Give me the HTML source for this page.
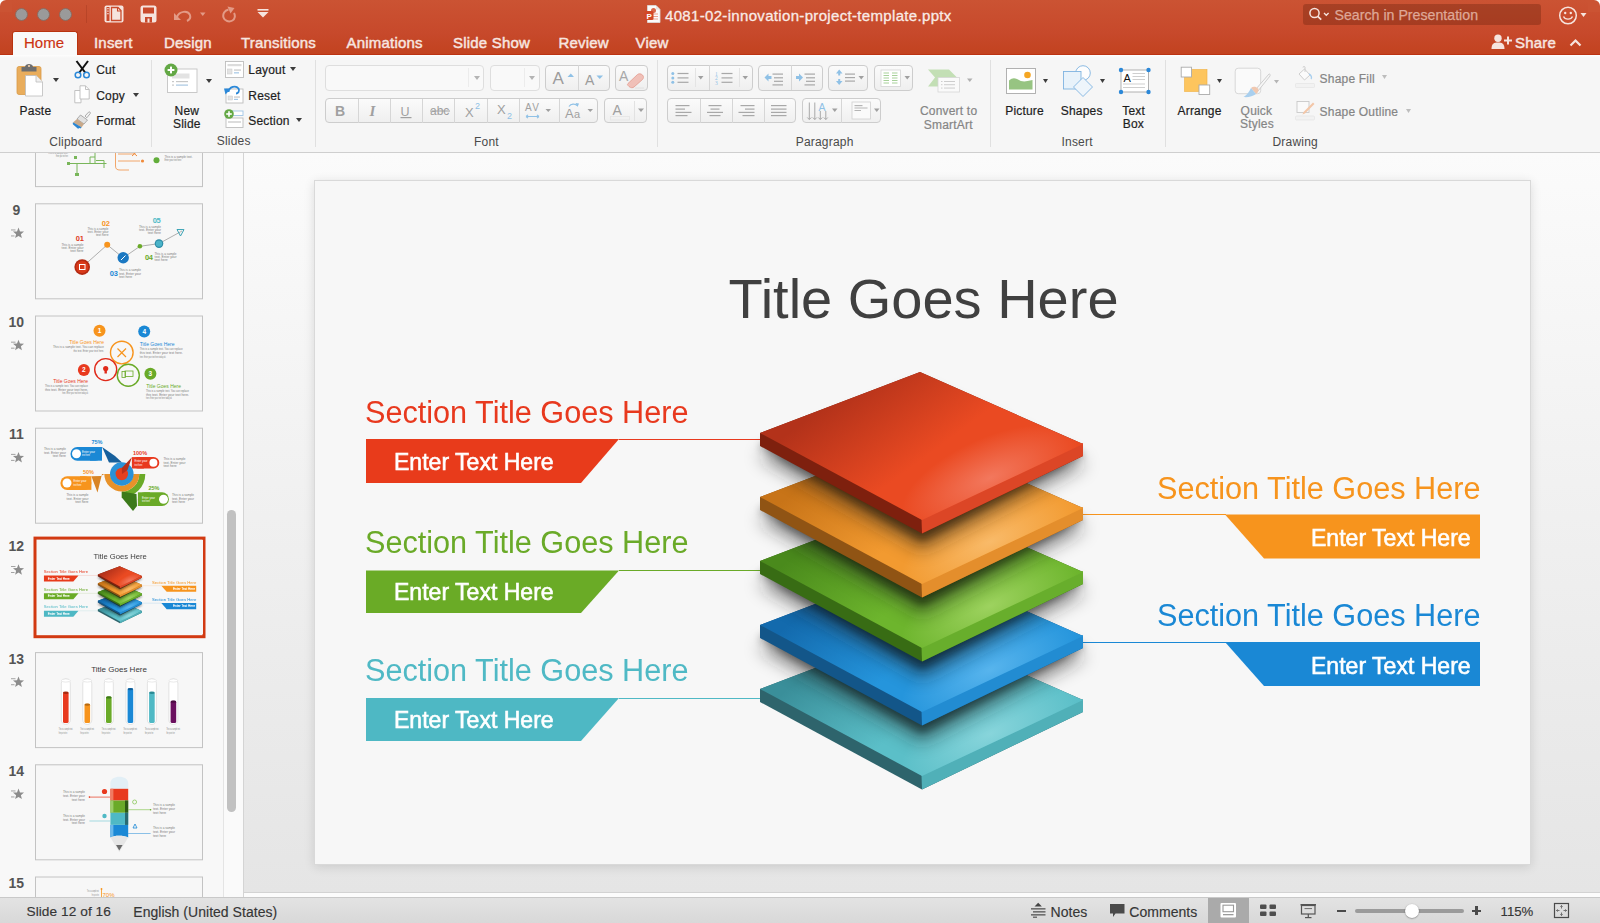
<!DOCTYPE html>
<html><head><meta charset="utf-8">
<style>
*{margin:0;padding:0;box-sizing:border-box}
html,body{width:1600px;height:923px;overflow:hidden;background:#f5f5f5;font-family:"Liberation Sans",sans-serif}
.a{position:absolute}
#top{position:absolute;left:0;top:0;width:1600px;height:55px;background:linear-gradient(#cb5333,#c7492b 60%,#c2421f)}
.tab{position:absolute;top:34px;margin-left:-0.5px;font-size:15px;line-height:17px;font-weight:normal;letter-spacing:0.2px;-webkit-text-stroke:0.45px currentColor;color:#f7e6e0;white-space:nowrap}
#hometab{position:absolute;left:12px;top:30.5px;width:66px;height:25px;background:#f9f9f9;border-radius:3px 3px 0 0;border:1px solid #b9330f;border-bottom:none}
#ribbon{position:absolute;left:0;top:55px;width:1600px;height:97px;background:linear-gradient(#fdfdfd,#f6f6f6 3px,#f6f6f6)}
#sep{position:absolute;left:0;top:152px;width:1600px;height:1px;background:#cfcfcf}
#left{position:absolute;left:0;top:153px;width:243px;height:744px;background:#f8f8f8}
#canvas{position:absolute;left:244px;top:153px;width:1356px;height:740px;background:linear-gradient(#fbfbfb,#f2f2f2 40%,#e5e5e5)}
#slide{position:absolute;left:314px;top:180px;width:1217px;height:685px;background:#f7f7f7;border:1px solid #d9d9d9;box-shadow:0 2px 10px rgba(0,0,0,0.12);overflow:hidden}
#status{display:none}
.st{position:absolute;font-size:14px;line-height:16px;color:#363636;white-space:nowrap;margin-top:0.5px;letter-spacing:0.03px;-webkit-text-stroke:0.15px currentColor}
.stt{font-size:31px;line-height:1;white-space:nowrap;transform:scaleX(0.988);transform-origin:0 0}
.ett{font-size:24px;line-height:1;color:#fff;white-space:nowrap;transform:scaleX(0.96);transform-origin:0 0;-webkit-text-stroke:0.6px #fff}
.tl{top:7.5px;width:13px;height:13px;border-radius:50%;background:#9a9a9a;border:0.5px solid #8d6a5e}
.rl{position:absolute;font-size:12px;line-height:14px;color:#1e1e1e;white-space:nowrap;margin-top:1px;letter-spacing:0.2px;-webkit-text-stroke:0.2px currentColor}
.rl.dis{color:#858585}
.glbl{position:absolute;font-size:12px;line-height:14px;color:#4a4a4a;white-space:nowrap;margin-top:0.5px;letter-spacing:0.2px}
.arr{width:6px;height:5px;fill:#3c3c3c;overflow:visible}
.arrl{width:6px;height:5px;fill:#b4b4b4;overflow:visible}
.arrd{width:6px;height:5px;fill:#bdbdbd;overflow:visible}
.tbox{position:absolute;border:1px solid #dedede;border-radius:4px;background:#f9f9f9}
.btn{position:absolute;border:1px solid #cdcdcd;border-radius:4px;background:linear-gradient(#fbfbfb,#efefef)}
.bdiv{position:absolute;width:1px;background:#d6d6d6}
.gsep{position:absolute;top:60px;width:1px;height:87px;background:#e0e0e0}
</style></head><body>
<div id="top"></div>
<div class="a" style="left:0;top:54px;width:1600px;height:1px;background:#bb3212"></div>
<div id="hometab"></div>
<!-- window corners -->
<div class="a" style="left:0;top:0;width:6px;height:6px;background:#fff"></div>
<div class="a" style="left:0;top:0;width:12px;height:12px;border-radius:6px 0 0 0;background:#cb5333"></div>
<div class="a" style="left:1594px;top:0;width:6px;height:6px;background:#fff"></div>
<div class="a" style="left:1588px;top:0;width:12px;height:12px;border-radius:0 6px 0 0;background:#cb5333"></div>
<!-- traffic lights -->
<div class="a tl" style="left:14.5px"></div>
<div class="a tl" style="left:36.5px"></div>
<div class="a tl" style="left:58.5px"></div>
<div class="a" style="left:86px;top:5px;width:1px;height:18px;background:rgba(120,30,10,0.2)"></div>
<!-- quick access -->
<svg class="a" style="left:104px;top:5px" width="21" height="19" viewBox="0 0 21 19">
<rect x="0.5" y="0.5" width="19" height="17" rx="2" fill="#f6e4de"/>
<rect x="2.5" y="2" width="3" height="14" fill="#c94a2c"/>
<rect x="3.3" y="3" width="1.3" height="1.3" fill="#f6e4de"/><rect x="3.3" y="5.5" width="1.3" height="1.3" fill="#f6e4de"/><rect x="3.3" y="8" width="1.3" height="1.3" fill="#f6e4de"/>
<path d="M7.5 2.5 H14 L17 5.5 V15.5 H7.5 Z" fill="none" stroke="#c94a2c" stroke-width="1.3"/>
<path d="M13.5 2.5 V6 H17" fill="none" stroke="#c94a2c" stroke-width="1.1"/>
</svg>
<svg class="a" style="left:140px;top:5px" width="18" height="19" viewBox="0 0 18 19">
<rect x="0.5" y="0.5" width="16" height="17" rx="2.5" fill="#f6e4de"/>
<rect x="3" y="2.5" width="11" height="6" fill="#c94a2c"/>
<rect x="5" y="12" width="7" height="5.5" fill="#c94a2c"/>
<rect x="7.5" y="13.5" width="2" height="4" fill="#f6e4de"/>
</svg>
<svg class="a" style="left:173px;top:8px" width="34" height="14" viewBox="0 0 34 14">
<path d="M4 9 C6 3, 15 2, 17 7 C18 10, 16 12, 14 13" fill="none" stroke="#e39a86" stroke-width="2"/>
<path d="M1 5 L1 12 L8 12 Z" fill="#e39a86"/>
<path d="M27 4.5 L32.5 4.5 L29.75 8 Z" fill="#e39a86"/>
</svg>
<svg class="a" style="left:221px;top:6px" width="17" height="17" viewBox="0 0 17 17">
<path d="M7.5 3.5 C3.5 4.5, 1.5 8, 2.5 11.5 C3.5 15, 8 16.5, 11.5 14.5 C14 13, 14.5 9.5, 13 7" fill="none" stroke="#e39a86" stroke-width="2"/>
<path d="M6.5 0.5 L13.5 2 L9.5 7.5 Z" fill="#e39a86"/>
</svg>
<svg class="a" style="left:257px;top:9px" width="12" height="9" viewBox="0 0 12 9">
<rect x="0.5" y="0" width="11" height="1.6" fill="#f6e4de"/>
<path d="M0.5 3 H11.5 L6 8.5 Z" fill="#f6e4de"/>
</svg>
<!-- filename -->
<svg class="a" style="left:644px;top:5px" width="17" height="19" viewBox="0 0 17 19">
<path d="M3.5 0.5 H12 L16 4.5 V17.5 H3.5 Z" fill="#fbfbfb" stroke="#ddd" stroke-width="0.8"/>
<path d="M12 0.5 V4.5 H16" fill="#e6e6e6"/>
<line x1="9" y1="9" x2="14" y2="9" stroke="#e89a84" stroke-width="0.9"/>
<line x1="9" y1="11.5" x2="14" y2="11.5" stroke="#e89a84" stroke-width="0.9"/>
<line x1="9" y1="14" x2="14" y2="14" stroke="#e89a84" stroke-width="0.9"/>
<circle cx="9.5" cy="5.5" r="2.5" fill="#d9694c"/>
<rect x="0.5" y="6" width="9" height="9" rx="1.5" fill="#d24726"/>
<text x="2.6" y="13.6" font-size="8" font-family="Liberation Sans" font-weight="bold" fill="#fff">P</text>
</svg>
<div class="a" style="left:665px;top:7.8px;font-size:15px;line-height:16px;letter-spacing:0.33px;-webkit-text-stroke:0.3px currentColor;color:#f9ebe6;white-space:nowrap">4081-02-innovation-project-template.pptx</div>
<!-- search -->
<div class="a" style="left:1303px;top:4px;width:238px;height:21px;border-radius:3px;background:rgba(80,20,5,0.28)"></div>
<svg class="a" style="left:1308px;top:7px" width="24" height="15" viewBox="0 0 24 15">
<circle cx="6.5" cy="6" r="4.6" fill="none" stroke="#f6e4de" stroke-width="1.5"/>
<line x1="9.8" y1="9.3" x2="13.2" y2="12.7" stroke="#f6e4de" stroke-width="1.7"/>
<path d="M16 6 L18.3 8.3 L20.6 6" fill="none" stroke="#f6e4de" stroke-width="1.3"/>
</svg>
<div class="a" style="left:1334.5px;top:7px;font-size:14.2px;line-height:16px;-webkit-text-stroke:0.25px currentColor;color:#dea797;white-space:nowrap">Search in Presentation</div>
<svg class="a" style="left:1557px;top:5px" width="32" height="21" viewBox="0 0 32 21">
<circle cx="11" cy="10.5" r="8.3" fill="none" stroke="#f6e4de" stroke-width="1.5"/>
<circle cx="8.2" cy="8" r="1.2" fill="#f6e4de"/><circle cx="13.8" cy="8" r="1.2" fill="#f6e4de"/>
<path d="M6.5 11.5 C8 15, 14 15, 15.5 11.5" fill="none" stroke="#f6e4de" stroke-width="1.4"/>
<path d="M23.5 8 L29.5 8 L26.5 12 Z" fill="#f6e4de"/>
</svg>
<!-- tabs -->
<div class="a tab" style="left:24.5px;top:34px;letter-spacing:0;-webkit-text-stroke:0.15px currentColor;color:#cc3210">Home</div>
<div class="a tab" style="left:94.5px">Insert</div>
<div class="a tab" style="left:164.5px">Design</div>
<div class="a tab" style="left:241.5px">Transitions</div>
<div class="a tab" style="left:347px">Animations</div>
<div class="a tab" style="left:453.5px">Slide Show</div>
<div class="a tab" style="left:559px">Review</div>
<div class="a tab" style="left:636px">View</div>
<svg class="a" style="left:1491px;top:34px" width="22" height="16" viewBox="0 0 22 16">
<circle cx="7" cy="4.2" r="3.7" fill="#f6e4de"/>
<path d="M0.5 15 C0.5 9.5, 3 8.5, 7 8.5 C11 8.5, 13.5 9.5, 13.5 15 Z" fill="#f6e4de"/>
<rect x="13" y="5.5" width="8" height="2" fill="#f6e4de"/><rect x="16" y="2.5" width="2" height="8" fill="#f6e4de"/>
</svg>
<div class="a tab" style="left:1515.5px">Share</div>
<svg class="a" style="left:1569px;top:38px" width="13" height="9" viewBox="0 0 13 9">
<path d="M1.5 7.5 L6.5 2.5 L11.5 7.5" fill="none" stroke="#f6e4de" stroke-width="2.2"/>
</svg>

<div id="ribbon"></div>
<div id="sep"></div>
<!-- ===== RIBBON ===== -->
<div class="gsep" style="left:151px"></div>
<div class="gsep" style="left:315px"></div>
<div class="gsep" style="left:657px"></div>
<div class="gsep" style="left:990px"></div>
<div class="gsep" style="left:1165px"></div>
<!-- Clipboard -->
<svg class="a" style="left:16px;top:62px" width="28" height="35" viewBox="0 0 28 35">
<rect x="1" y="4.5" width="24" height="28" rx="2" fill="#e9ad5c" stroke="#d99a48" stroke-width="0.8"/>
<path d="M5.5 5 H20.5 V9.5 H5.5 Z" fill="#6e6e6e"/>
<path d="M9 5 C9 1, 17 1, 17 5 Z" fill="#6e6e6e"/>
<circle cx="13" cy="4" r="1.1" fill="#f3d2b0"/>
<path d="M9.5 13.5 H20 L26.5 20 V34 H9.5 Z" fill="#fff" stroke="#bdbdbd" stroke-width="0.8"/>
<path d="M20 13.5 V20 H26.5" fill="#f0f0f0" stroke="#bdbdbd" stroke-width="0.8"/>
</svg>
<svg class="a arr" style="left:53px;top:78px"><path d="M0 0H6L3 4Z"/></svg>
<div class="rl" style="left:19.6px;top:103.2px">Paste</div>
<svg class="a" style="left:73px;top:60px" width="19" height="19" viewBox="0 0 19 19">
<path d="M3.5 1 L12.5 13" stroke="#111" stroke-width="2" fill="none"/>
<path d="M15 1 L6 13" stroke="#111" stroke-width="2" fill="none"/>
<circle cx="5" cy="15" r="2.8" fill="none" stroke="#2b88d8" stroke-width="1.5"/>
<circle cx="13.5" cy="15" r="2.8" fill="none" stroke="#2b88d8" stroke-width="1.5"/>
</svg>
<div class="rl" style="left:96.2px;top:62.3px">Cut</div>
<svg class="a" style="left:74px;top:85px" width="17" height="19" viewBox="0 0 17 19">
<path d="M0.8 5.5 H7 V17.8 H0.8 Z" fill="#fff" stroke="#bcbcbc" stroke-width="0.9"/>
<path d="M6 0.8 H11.5 L15.2 4.5 V14 H6 Z" fill="#fff" stroke="#bcbcbc" stroke-width="0.9"/>
<path d="M11.5 0.8 V4.5 H15.2" fill="none" stroke="#bcbcbc" stroke-width="0.9"/>
</svg>
<div class="rl" style="left:96.2px;top:87.7px">Copy</div>
<svg class="a arr" style="left:132.5px;top:92.5px"><path d="M0 0H6L3 4Z"/></svg>
<svg class="a" style="left:72px;top:111px" width="20" height="18" viewBox="0 0 20 18">
<path d="M13 5 L16.5 1.2 C17.5 0.3, 19 1.5, 18.2 2.6 L14.8 6.8 Z" fill="#f2f2f2" stroke="#9a9a9a" stroke-width="0.8"/>
<path d="M8.5 4 L15.5 9 L12 13 L5 8 Z" fill="#e2e2e2" stroke="#9a9a9a" stroke-width="0.8"/>
<path d="M5 8 L12 13 L9.5 16.5 L1 11.5 Z" fill="#c9a98a"/>
<path d="M1 11.5 L9.5 16.5 L8.5 17.5 L0.5 12.2 Z" fill="#2b86d2"/>
<path d="M1.5 11.8 L9.3 16.3 L6 17.8 L0.8 13.2 Z" fill="#2b86d2"/>
</svg>
<div class="rl" style="left:96.2px;top:113px">Format</div>
<div class="glbl" style="left:49.3px;top:134px">Clipboard</div>
<!-- Slides -->
<svg class="a" style="left:163px;top:62px" width="36" height="32" viewBox="0 0 36 32">
<rect x="4.5" y="7" width="29.5" height="23.5" fill="#fff" stroke="#c4c4c4" stroke-width="0.9"/>
<rect x="9" y="11.5" width="17.5" height="5" fill="#e3e3e3"/>
<rect x="9" y="19" width="2" height="1.2" fill="#c8c8c8"/><rect x="13" y="19" width="12" height="1.2" fill="#c8c8c8"/>
<rect x="9" y="22.5" width="2" height="1.2" fill="#c8c8c8"/><rect x="13" y="22.5" width="12" height="1.2" fill="#a9c7e2"/>
<circle cx="8" cy="8" r="6.5" fill="#63a845"/>
<rect x="4.6" y="7" width="6.8" height="2" fill="#fff"/><rect x="7" y="4.6" width="2" height="6.8" fill="#fff"/>
</svg>
<svg class="a arr" style="left:206px;top:78.5px"><path d="M0 0H6L3 4Z"/></svg>
<div class="rl" style="left:174.6px;top:103px">New</div>
<div class="rl" style="left:173px;top:116.4px">Slide</div>
<svg class="a" style="left:224px;top:60px" width="21" height="19" viewBox="0 0 21 19">
<rect x="1.5" y="1.5" width="18" height="16" fill="#fff" stroke="#bdbdbd" stroke-width="0.9"/>
<rect x="3.5" y="4" width="14" height="2.2" fill="#dcdcdc"/>
<rect x="3.5" y="9" width="4.5" height="5" fill="#e3e3e3" stroke="#c8c8c8" stroke-width="0.5"/>
<rect x="10" y="9.5" width="7" height="1.1" fill="#c0c0c0"/><rect x="10" y="12.3" width="5" height="1.1" fill="#9cc2e4"/>
</svg>
<div class="rl" style="left:248.3px;top:62px">Layout</div>
<svg class="a arr" style="left:289.8px;top:67px"><path d="M0 0H6L3 4Z"/></svg>
<svg class="a" style="left:223px;top:84px" width="22" height="20" viewBox="0 0 22 20">
<rect x="3" y="5" width="17" height="14" fill="#fff" stroke="#bdbdbd" stroke-width="0.9"/>
<rect x="5" y="12" width="4.5" height="4" fill="#e3e3e3" stroke="#c8c8c8" stroke-width="0.5"/>
<rect x="11" y="12.5" width="6" height="1.1" fill="#c0c0c0"/><rect x="11" y="14.8" width="4" height="1.1" fill="#9cc2e4"/>
<path d="M5.5 8 C6 2.5, 13 1, 15.5 4.5 C17 7, 15 9.5, 13 9.5" fill="none" stroke="#2b88d8" stroke-width="1.8"/>
<path d="M1 4.5 L8 4.5 L2.5 10.5 Z" fill="#2b88d8"/>
</svg>
<div class="rl" style="left:248.3px;top:87.8px">Reset</div>
<svg class="a" style="left:223px;top:109px" width="22" height="20" viewBox="0 0 22 20">
<rect x="9" y="2" width="11" height="4.5" fill="#fff" stroke="#9fc5e6" stroke-width="0.9"/>
<rect x="3" y="9" width="17" height="9.5" fill="#fff" stroke="#bdbdbd" stroke-width="0.9"/>
<rect x="5" y="12" width="13" height="2" fill="#dcdcdc"/>
<circle cx="6" cy="5" r="4.8" fill="#63a845"/>
<rect x="3.2" y="4.2" width="5.6" height="1.6" fill="#fff"/><rect x="5.2" y="2.2" width="1.6" height="5.6" fill="#fff"/>
</svg>
<div class="rl" style="left:248.3px;top:113px">Section</div>
<svg class="a arr" style="left:296px;top:118px"><path d="M0 0H6L3 4Z"/></svg>
<div class="glbl" style="left:216.8px;top:133.7px">Slides</div>
<!-- Font -->
<div class="tbox" style="left:325px;top:64.5px;width:159px;height:26px"></div>
<div class="a" style="left:468px;top:68px;width:1px;height:19px;background:#ececec"></div>
<svg class="a arrl" style="left:473.5px;top:76px"><path d="M0 0H6L3 4Z"/></svg>
<div class="tbox" style="left:489.5px;top:64.5px;width:50px;height:26px"></div>
<div class="a" style="left:523.5px;top:68px;width:1px;height:19px;background:#ececec"></div>
<svg class="a arrl" style="left:529px;top:76px"><path d="M0 0H6L3 4Z"/></svg>
<div class="btn" style="left:545px;top:64.5px;width:64.5px;height:26px"></div>
<div class="bdiv" style="left:577.5px;top:65px;height:25px"></div>
<svg class="a" style="left:548px;top:66px" width="60" height="22" viewBox="0 0 60 22">
<text x="4.5" y="18" font-family="Liberation Sans" font-size="17" fill="#9c9c9c">A</text>
<path d="M19.5 11 L22.8 7.5 L26 11 Z" fill="#8fc1e6"/>
<text x="37" y="18.5" font-family="Liberation Sans" font-size="14" fill="#9c9c9c">A</text>
<path d="M48.5 9.5 L55 9.5 L51.75 13 Z" fill="#8fc1e6"/>
</svg>
<div class="btn" style="left:615px;top:64.5px;width:32.5px;height:26px"></div>
<svg class="a" style="left:617px;top:66px" width="29" height="23" viewBox="0 0 29 23">
<text x="2" y="14.5" font-family="Liberation Sans" font-size="14" fill="#a8a8a8">A</text>
<path d="M11 17.5 L20.5 8.5 C21.5 7.5, 24 7.5, 25.5 9 C27 10.5, 26.5 12.5, 25.5 13.5 L17 21 C16 22, 13.5 22, 12 20.5 C10.5 19, 10 18.5, 11 17.5 Z" fill="#f0c0b8" stroke="#e39a8e" stroke-width="0.8"/>
<line x1="18" y1="22" x2="27" y2="22" stroke="#ddd" stroke-width="0.8"/>
</svg>
<div class="btn" style="left:325.3px;top:98.3px;width:273px;height:25.2px"></div>
<div class="bdiv" style="left:357.5px;top:99px;height:24px"></div>
<div class="bdiv" style="left:389.5px;top:99px;height:24px"></div>
<div class="bdiv" style="left:421.5px;top:99px;height:24px"></div>
<div class="bdiv" style="left:453.5px;top:99px;height:24px"></div>
<div class="bdiv" style="left:486.5px;top:99px;height:24px"></div>
<div class="bdiv" style="left:518.5px;top:99px;height:24px"></div>
<div class="bdiv" style="left:558.5px;top:99px;height:24px"></div>
<svg class="a" style="left:325px;top:98px" width="275" height="26" viewBox="0 0 275 26">
<text x="10" y="18" font-family="Liberation Sans" font-size="14" font-weight="bold" fill="#a0a0a0">B</text>
<text x="44.5" y="18" font-family="Liberation Serif" font-size="15" font-style="italic" font-weight="bold" fill="#a0a0a0">I</text>
<text x="75.5" y="17.5" font-family="Liberation Sans" font-size="12.5" fill="#a0a0a0">U</text>
<rect x="75.5" y="19" width="11" height="1.2" fill="#a0a0a0"/>
<text x="105" y="17" font-family="Liberation Sans" font-size="12" fill="#a0a0a0">abc</text>
<rect x="105" y="12.5" width="20" height="1" fill="#a0a0a0"/>
<text x="140" y="18.5" font-family="Liberation Sans" font-size="13" fill="#a0a0a0">X</text>
<text x="150" y="11" font-family="Liberation Sans" font-size="9" fill="#8fc1e6">2</text>
<text x="172" y="16" font-family="Liberation Sans" font-size="13" fill="#a0a0a0">X</text>
<text x="182" y="21" font-family="Liberation Sans" font-size="9" fill="#8fc1e6">2</text>
<text x="200" y="13" font-family="Liberation Sans" font-size="10" fill="#a0a0a0" letter-spacing="1.2">AV</text>
<path d="M201 18.5 H214 M201 18.5 L203 16.8 M201 18.5 L203 20.2 M214 18.5 L212 16.8 M214 18.5 L212 20.2" stroke="#8fc1e6" stroke-width="1.1" fill="none"/>
<path d="M220.5 11 H226 L223.25 14 Z" fill="#a0a0a0"/>
<text x="240" y="19.5" font-family="Liberation Sans" font-size="13" fill="#a0a0a0">A</text>
<text x="249" y="19.5" font-family="Liberation Sans" font-size="11" fill="#a0a0a0">a</text>
<path d="M244 8.5 C246 5.5, 250 5.5, 252 7.5" stroke="#8fc1e6" stroke-width="1.2" fill="none"/><path d="M250.5 5 L254 5.5 L252.5 9 Z" fill="#8fc1e6"/>
<path d="M262.5 11 H268 L265.25 14 Z" fill="#a0a0a0"/>
</svg>
<div class="btn" style="left:604px;top:98.3px;width:43.4px;height:25.2px"></div>
<div class="bdiv" style="left:634px;top:101px;height:20px;background:#e2e2e2"></div>
<svg class="a" style="left:604px;top:98px" width="44" height="26" viewBox="0 0 44 26">
<text x="8.5" y="16.5" font-family="Liberation Sans" font-size="14" fill="#a0a0a0">A</text>
<rect x="6.5" y="18.5" width="19" height="3.5" fill="none" stroke="#e4e4e4" stroke-width="0.8"/>
<path d="M34 10.5 H40 L37 14 Z" fill="#a0a0a0"/>
</svg>
<div class="glbl" style="left:474px;top:134px">Font</div>
<!-- Paragraph -->
<div class="btn" style="left:667.3px;top:64.5px;width:85.5px;height:26px"></div>
<div class="bdiv" style="left:708.5px;top:65px;height:25px"></div>
<div class="a" style="left:695px;top:68px;width:1px;height:19px;background:#e4e4e4"></div>
<div class="a" style="left:739.3px;top:68px;width:1px;height:19px;background:#e4e4e4"></div>
<svg class="a" style="left:667px;top:64px" width="86" height="27" viewBox="0 0 86 27">
<circle cx="5.8" cy="9.5" r="1.5" fill="#8fc1e6"/><circle cx="5.8" cy="13.9" r="1.5" fill="#8fc1e6"/><circle cx="5.8" cy="18.3" r="1.5" fill="#8fc1e6"/>
<rect x="10.5" y="8.9" width="11" height="1.2" fill="#a8a8a8"/><rect x="10.5" y="13.3" width="11" height="1.2" fill="#a8a8a8"/><rect x="10.5" y="17.7" width="11" height="1.2" fill="#a8a8a8"/>
<path d="M31 12 H36.5 L33.75 15.5 Z" fill="#a0a0a0"/>
<text x="48" y="11.5" font-family="Liberation Serif" font-size="5.5" fill="#8fc1e6">1</text>
<text x="48" y="16" font-family="Liberation Serif" font-size="5.5" fill="#8fc1e6">2</text>
<text x="48" y="20.5" font-family="Liberation Serif" font-size="5.5" fill="#8fc1e6">3</text>
<rect x="54.5" y="8.9" width="11" height="1.2" fill="#a8a8a8"/><rect x="54.5" y="13.3" width="11" height="1.2" fill="#a8a8a8"/><rect x="54.5" y="17.7" width="11" height="1.2" fill="#a8a8a8"/>
<path d="M75.5 12 H81 L78.25 15.5 Z" fill="#a0a0a0"/>
</svg>
<div class="btn" style="left:758.4px;top:64.5px;width:64.2px;height:26px"></div>
<div class="bdiv" style="left:790.5px;top:65px;height:25px"></div>
<svg class="a" style="left:758px;top:64px" width="65" height="27" viewBox="0 0 65 27">
<path d="M6.5 13.5 L10.5 9.5 V12 H13.5 V15 H10.5 V17.5 Z" fill="#8fc1e6"/>
<rect x="14.5" y="9.5" width="10.5" height="1.2" fill="#a8a8a8"/><rect x="16" y="13.2" width="9" height="1.2" fill="#a8a8a8"/><rect x="16" y="16.7" width="9" height="1.2" fill="#a8a8a8"/><rect x="14.5" y="20.3" width="10.5" height="1.2" fill="#a8a8a8"/>
<path d="M45 13.5 L41 9.5 V12 H38 V15 H41 V17.5 Z" fill="#8fc1e6"/>
<rect x="46.5" y="9.5" width="10.5" height="1.2" fill="#a8a8a8"/><rect x="48" y="13.2" width="9" height="1.2" fill="#a8a8a8"/><rect x="48" y="16.7" width="9" height="1.2" fill="#a8a8a8"/><rect x="46.5" y="20.3" width="10.5" height="1.2" fill="#a8a8a8"/>
</svg>
<div class="btn" style="left:828.4px;top:64.5px;width:40px;height:26px"></div>
<svg class="a" style="left:828px;top:64px" width="41" height="27" viewBox="0 0 41 27">
<path d="M11.2 5.5 L14.5 9.5 H12.2 V11.5 H10.2 V9.5 H8 Z" fill="#8fc1e6"/>
<path d="M11.2 21 L14.5 17 H12.2 V15 H10.2 V17 H8 Z" fill="#8fc1e6"/>
<rect x="17" y="9.5" width="10" height="1.2" fill="#a8a8a8"/><rect x="17" y="13" width="10" height="1.2" fill="#a8a8a8"/><rect x="17" y="16.5" width="10" height="1.2" fill="#a8a8a8"/>
<path d="M30.5 12 H36 L33.25 15.5 Z" fill="#a0a0a0"/>
</svg>
<div class="btn" style="left:874px;top:64.5px;width:39.4px;height:26px"></div>
<svg class="a" style="left:874px;top:64px" width="40" height="27" viewBox="0 0 40 27">
<rect x="7" y="6" width="19.5" height="16.5" fill="#fff" stroke="#d4d4d4" stroke-width="0.8"/>
<g fill="#a8d19a"><rect x="9.5" y="8.5" width="5.5" height="1"/><rect x="9.5" y="11" width="5.5" height="1"/><rect x="9.5" y="13.5" width="5.5" height="1"/><rect x="9.5" y="16" width="5.5" height="1"/><rect x="9.5" y="18.5" width="5.5" height="1"/>
<rect x="18" y="8.5" width="5.5" height="1"/><rect x="18" y="11" width="5.5" height="1"/><rect x="18" y="13.5" width="5.5" height="1"/><rect x="18" y="16" width="5.5" height="1"/><rect x="18" y="18.5" width="5.5" height="1"/></g>
<path d="M30.5 12 H36 L33.25 15.5 Z" fill="#a0a0a0"/>
</svg>
<div class="btn" style="left:667.3px;top:98.3px;width:128.6px;height:25.2px"></div>
<div class="bdiv" style="left:699.5px;top:99px;height:24px"></div>
<div class="bdiv" style="left:731.5px;top:99px;height:24px"></div>
<div class="bdiv" style="left:763.5px;top:99px;height:24px"></div>
<svg class="a" style="left:667px;top:98px" width="130" height="26" viewBox="0 0 130 26">
<g fill="#a8a8a8">
<rect x="8.5" y="7" width="14" height="1.2"/><rect x="8.5" y="10.5" width="9.5" height="1.2"/><rect x="8.5" y="13.8" width="16" height="1.2"/><rect x="8.5" y="17" width="12" height="1.2"/>
<rect x="41.5" y="7" width="13" height="1.2"/><rect x="43.5" y="10.5" width="9" height="1.2"/><rect x="40" y="13.8" width="16" height="1.2"/><rect x="42.5" y="17" width="11" height="1.2"/>
<rect x="73.5" y="7" width="14" height="1.2"/><rect x="78" y="10.5" width="9.5" height="1.2"/><rect x="71.5" y="13.8" width="16" height="1.2"/><rect x="75.5" y="17" width="12" height="1.2"/>
<rect x="104" y="7" width="15.5" height="1.2"/><rect x="104" y="10.5" width="15.5" height="1.2"/><rect x="104" y="13.8" width="15.5" height="1.2"/><rect x="104" y="17" width="15.5" height="1.2"/>
</g>
</svg>
<div class="btn" style="left:801.5px;top:98.3px;width:79.8px;height:25.2px"></div>
<div class="bdiv" style="left:841.4px;top:99px;height:24px"></div>
<svg class="a" style="left:801px;top:98px" width="81" height="26" viewBox="0 0 81 26">
<g stroke="#a8a8a8" stroke-width="1" fill="none">
<path d="M8.3 4.5 V21.5 M6.3 19.5 L8.3 21.5 L10.3 19.5"/><path d="M13.8 4.5 V21.5 M11.8 19.5 L13.8 21.5 L15.8 19.5"/>
<path d="M19.3 13 V21.5 M17.3 19.5 L19.3 21.5 L21.3 19.5"/><path d="M24.8 13 V21.5 M22.8 19.5 L24.8 21.5 L26.8 19.5"/>
</g>
<text x="17.5" y="12.5" font-family="Liberation Sans" font-size="10.5" fill="#8fc1e6">A</text>
<path d="M31 10.5 H36.5 L33.75 14 Z" fill="#a0a0a0"/>
<rect x="51" y="4" width="18.5" height="17" fill="#fafafa" stroke="#d0d0d0" stroke-width="0.8"/>
<rect x="53.5" y="7" width="8" height="1.2" fill="#b5b5b5"/><rect x="53.5" y="9.5" width="13" height="1" fill="#b5b5b5"/><rect x="53.5" y="12" width="6.5" height="1" fill="#b5b5b5"/>
<path d="M73 10.5 H78.5 L75.75 14 Z" fill="#a0a0a0"/>
</svg>
<svg class="a" style="left:926px;top:68px" width="50" height="26" viewBox="0 0 50 26">
<path d="M2 1.5 H23 L31 9.5 L23 18.5 H2 L9 9.5 Z" fill="#c3dfb5"/>
<rect x="12" y="9.5" width="21.5" height="14.5" fill="#fafafa" stroke="#d6d6d6" stroke-width="0.8"/>
<g fill="#c8c8c8"><rect x="15" y="13" width="1.5" height="0.9"/><rect x="18" y="13" width="11" height="0.9"/><rect x="15" y="16.3" width="1.5" height="0.9"/><rect x="18" y="16.3" width="11" height="0.9"/><rect x="15" y="19.6" width="1.5" height="0.9"/><rect x="18" y="19.6" width="11" height="0.9"/></g>
<path d="M41 10.5 H46.5 L43.75 14 Z" fill="#b0b0b0"/>
</svg>
<div class="rl dis" style="left:919.9px;top:103px">Convert to</div>
<div class="rl dis" style="left:923.8px;top:116.6px">SmartArt</div>
<div class="glbl" style="left:795.7px;top:134px">Paragraph</div>
<!-- Insert -->
<svg class="a" style="left:1005px;top:67px" width="32" height="28" viewBox="0 0 32 28">
<rect x="1.5" y="1.5" width="29" height="25" fill="#fff" stroke="#a9a9a9" stroke-width="0.9"/>
<path d="M4 22.5 V13.5 C7 11, 9 10.5, 12 12 C16 14.5, 19 15, 22.5 14 L27.5 13 V22.5 Z" fill="#97c482"/>
<circle cx="22.5" cy="8" r="3.3" fill="#f5a623"/>
</svg>
<svg class="a arr" style="left:1042.5px;top:78.6px"><path d="M0 0H5L2.5 4Z"/></svg>
<div class="rl" style="left:1005.2px;top:102.7px">Picture</div>
<svg class="a" style="left:1061px;top:64px" width="36" height="33" viewBox="0 0 36 33">
<circle cx="22" cy="9" r="7.3" fill="#fdfdfd" stroke="#7fb3e0" stroke-width="0.9"/>
<rect x="2.5" y="7.5" width="17.5" height="17.5" fill="#e8f2fa" stroke="#7fb3e0" stroke-width="0.9"/>
<path d="M22 13.5 L31.5 23 L22 32.5 L12.5 23 Z" fill="#eef5fb" stroke="#7fb3e0" stroke-width="0.9"/>
</svg>
<svg class="a arr" style="left:1099.5px;top:78.6px"><path d="M0 0H5L2.5 4Z"/></svg>
<div class="rl" style="left:1060.8px;top:102.7px">Shapes</div>
<svg class="a" style="left:1118px;top:67px" width="34" height="28" viewBox="0 0 34 28">
<rect x="3" y="3" width="27.5" height="22" fill="#fff" stroke="#a9a9a9" stroke-width="0.9"/>
<text x="5.5" y="14.5" font-family="Liberation Sans" font-size="11" fill="#111">A</text>
<g fill="#cfcfcf"><rect x="14.5" y="6" width="12.5" height="1"/><rect x="14.5" y="9" width="12.5" height="1"/><rect x="14.5" y="12" width="12.5" height="1"/><rect x="5" y="16.5" width="22" height="1"/><rect x="5" y="20" width="22" height="1"/></g>
<circle cx="3" cy="3" r="2.2" fill="#2b88d8"/><circle cx="30.5" cy="3" r="2.2" fill="#2b88d8"/><circle cx="3" cy="25" r="2.2" fill="#2b88d8"/><circle cx="30.5" cy="25" r="2.2" fill="#2b88d8"/>
</svg>
<div class="rl" style="left:1122.3px;top:102.7px">Text</div>
<div class="rl" style="left:1122.8px;top:116px">Box</div>
<div class="glbl" style="left:1061.5px;top:134px">Insert</div>
<!-- Drawing -->
<svg class="a" style="left:1180px;top:66px" width="31" height="30" viewBox="0 0 31 30">
<rect x="4.5" y="3.5" width="22.5" height="22" fill="#fdc55e" stroke="#f0b040" stroke-width="0.6"/>
<rect x="1.2" y="1.2" width="10.3" height="9.8" fill="#fff" stroke="#aaa" stroke-width="0.9"/>
<rect x="19" y="19" width="10.7" height="9.5" fill="#fff" stroke="#aaa" stroke-width="0.9"/>
</svg>
<svg class="a arr" style="left:1217px;top:78.6px"><path d="M0 0H5L2.5 4Z"/></svg>
<div class="rl" style="left:1177.5px;top:103.3px">Arrange</div>
<svg class="a" style="left:1234px;top:67px" width="48" height="32" viewBox="0 0 48 32">
<rect x="1.2" y="1.2" width="25.5" height="25.5" rx="3" fill="#fafafa" stroke="#d4d4d4" stroke-width="0.9"/>
<path d="M35 7 L22 22 L24 24 L36 9 C36.5 8, 35.8 6.5, 35 7 Z" fill="#f6f6f6" stroke="#c4c4c4" stroke-width="0.8"/>
<path d="M17 21 C19 19, 22 19.5, 24 21.5 C25 23, 24.5 25.5, 22 27 Z" fill="#f0c8b0"/>
<path d="M17 21 L22 27 C19 29.5, 14 30.5, 9.5 30 C13 28, 15.5 24, 17 21 Z" fill="#a9cfee"/>
<path d="M40 13 H45 L42.5 16.5 Z" fill="#b5b5b5"/>
</svg>
<div class="rl dis" style="left:1240.6px;top:103.3px">Quick</div>
<div class="rl dis" style="left:1240px;top:116.3px">Styles</div>
<svg class="a" style="left:1294px;top:66px" width="22" height="23" viewBox="0 0 22 23">
<path d="M5 8 L10.5 3 L16 9 L10.5 14 Z" fill="#fbfbfb" stroke="#c9c9c9" stroke-width="0.9"/>
<path d="M9 1.5 C9 0, 11 0, 11 1.5 V6" stroke="#c9c9c9" stroke-width="0.9" fill="none"/>
<path d="M15 8 C17.5 9, 18 12, 17 13" stroke="#a9cfee" stroke-width="1.4" fill="none"/>
<rect x="1.5" y="17.5" width="19" height="4" rx="1" fill="#f2f2f2" stroke="#e4e4e4" stroke-width="0.7"/>
</svg>
<div class="rl dis" style="left:1319.6px;top:70.8px">Shape Fill</div>
<svg class="a arrd" style="left:1382px;top:75.3px"><path d="M0 0H5L2.5 4Z"/></svg>
<svg class="a" style="left:1294px;top:100px" width="22" height="21" viewBox="0 0 22 21">
<rect x="3" y="1.5" width="12" height="11" fill="#fafafa" stroke="#c9c9c9" stroke-width="0.9"/>
<path d="M19 2.5 L20.5 4 L11 13.5 L8.5 14.5 L9.5 12 Z" fill="#f3c7a8"/>
<rect x="1.5" y="16" width="19" height="4" rx="1" fill="#f2f2f2" stroke="#e4e4e4" stroke-width="0.7"/>
</svg>
<div class="rl dis" style="left:1319.6px;top:104.1px">Shape Outline</div>
<svg class="a arrd" style="left:1406.3px;top:109px"><path d="M0 0H5L2.5 4Z"/></svg>
<div class="glbl" style="left:1272.5px;top:134.2px">Drawing</div>

<div id="left"></div>
<div class="a" style="left:223px;top:153px;width:1px;height:744px;background:#e4e4e4"></div>
<div class="a" style="left:224px;top:153px;width:19px;height:744px;background:#fafafa"></div>
<div class="a" style="left:243px;top:153px;width:1px;height:744px;background:#d4d4d4"></div>
<div class="a" style="left:227px;top:510px;width:9px;height:302px;border-radius:4.5px;background:#c1c1c1"></div>
<svg class="a" style="left:0;top:153px" width="223" height="744" viewBox="0 153 223 744" font-family="Liberation Sans">
<rect x="35.5" y="91.6" width="167" height="95" fill="#f7f7f7" stroke="#c3c3c3" stroke-width="1"/>
<rect x="35.5" y="203.8" width="167" height="95" fill="#f7f7f7" stroke="#c3c3c3" stroke-width="1"/>
<text x="16.3" y="214.7" font-size="14" font-weight="bold" fill="#555" text-anchor="middle">9</text>
<polygon points="18.50,227.60 19.97,231.38 24.02,231.61 20.88,234.17 21.91,238.09 18.50,235.90 15.09,238.09 16.12,234.17 12.98,231.61 17.03,231.38" fill="#8c8c8c"/>
<rect x="11" y="229.5" width="4.5" height="0.9" fill="#9a9a9a"/><rect x="11" y="235.5" width="3.5" height="0.9" fill="#9a9a9a"/>
<rect x="35.5" y="316.0" width="167" height="95" fill="#f7f7f7" stroke="#c3c3c3" stroke-width="1"/>
<text x="16.3" y="326.9" font-size="14" font-weight="bold" fill="#555" text-anchor="middle">10</text>
<polygon points="18.50,339.80 19.97,343.58 24.02,343.81 20.88,346.37 21.91,350.29 18.50,348.10 15.09,350.29 16.12,346.37 12.98,343.81 17.03,343.58" fill="#8c8c8c"/>
<rect x="11" y="341.7" width="4.5" height="0.9" fill="#9a9a9a"/><rect x="11" y="347.7" width="3.5" height="0.9" fill="#9a9a9a"/>
<rect x="35.5" y="428.2" width="167" height="95" fill="#f7f7f7" stroke="#c3c3c3" stroke-width="1"/>
<text x="16.3" y="439.1" font-size="14" font-weight="bold" fill="#555" text-anchor="middle">11</text>
<polygon points="18.50,452.00 19.97,455.78 24.02,456.01 20.88,458.57 21.91,462.49 18.50,460.30 15.09,462.49 16.12,458.57 12.98,456.01 17.03,455.78" fill="#8c8c8c"/>
<rect x="11" y="453.9" width="4.5" height="0.9" fill="#9a9a9a"/><rect x="11" y="459.9" width="3.5" height="0.9" fill="#9a9a9a"/>
<rect x="35" y="538.1" width="169" height="98.6" fill="none" stroke="#d23a12" stroke-width="3"/>
<text x="16.3" y="551.3" font-size="14" font-weight="bold" fill="#555" text-anchor="middle">12</text>
<polygon points="18.50,564.20 19.97,567.98 24.02,568.21 20.88,570.77 21.91,574.69 18.50,572.50 15.09,574.69 16.12,570.77 12.98,568.21 17.03,567.98" fill="#8c8c8c"/>
<rect x="11" y="566.1" width="4.5" height="0.9" fill="#9a9a9a"/><rect x="11" y="572.1" width="3.5" height="0.9" fill="#9a9a9a"/>
<rect x="35.5" y="652.6" width="167" height="95" fill="#f7f7f7" stroke="#c3c3c3" stroke-width="1"/>
<text x="16.3" y="663.5" font-size="14" font-weight="bold" fill="#555" text-anchor="middle">13</text>
<polygon points="18.50,676.40 19.97,680.18 24.02,680.41 20.88,682.97 21.91,686.89 18.50,684.70 15.09,686.89 16.12,682.97 12.98,680.41 17.03,680.18" fill="#8c8c8c"/>
<rect x="11" y="678.3" width="4.5" height="0.9" fill="#9a9a9a"/><rect x="11" y="684.3" width="3.5" height="0.9" fill="#9a9a9a"/>
<rect x="35.5" y="764.8" width="167" height="95" fill="#f7f7f7" stroke="#c3c3c3" stroke-width="1"/>
<text x="16.3" y="775.7" font-size="14" font-weight="bold" fill="#555" text-anchor="middle">14</text>
<polygon points="18.50,788.60 19.97,792.38 24.02,792.61 20.88,795.17 21.91,799.09 18.50,796.90 15.09,799.09 16.12,795.17 12.98,792.61 17.03,792.38" fill="#8c8c8c"/>
<rect x="11" y="790.5" width="4.5" height="0.9" fill="#9a9a9a"/><rect x="11" y="796.5" width="3.5" height="0.9" fill="#9a9a9a"/>
<rect x="35.5" y="877.0" width="167" height="95" fill="#f7f7f7" stroke="#c3c3c3" stroke-width="1"/>
<text x="16.3" y="887.9" font-size="14" font-weight="bold" fill="#555" text-anchor="middle">15</text>
<polygon points="18.50,900.80 19.97,904.58 24.02,904.81 20.88,907.37 21.91,911.29 18.50,909.10 15.09,911.29 16.12,907.37 12.98,904.81 17.03,904.58" fill="#8c8c8c"/>
<rect x="11" y="902.7" width="4.5" height="0.9" fill="#9a9a9a"/><rect x="11" y="908.7" width="3.5" height="0.9" fill="#9a9a9a"/>
<g>
<text x="48.0" y="153.7" font-size="2.72" fill="#7c7c7c" font-family="Liberation Sans" textLength="20.0" lengthAdjust="spacingAndGlyphs">This is a sample text.</text><text x="56.0" y="156.9" font-size="2.72" fill="#7c7c7c" font-family="Liberation Sans" textLength="12.0" lengthAdjust="spacingAndGlyphs">Enter your text here</text>
<path d="M70 163.5 H106.5 M77 163.5 V174 M90 163.5 V157 H95 V163.5 M95 157 V153 M96 160.5 H104 V168" stroke="#79b65a" stroke-width="1" fill="none"/>
<rect x="74" y="156" width="3" height="3" fill="#79b65a"/><rect x="67" y="162" width="3" height="3" fill="#79b65a"/><rect x="75" y="173" width="4" height="3" fill="#79b65a"/>
<path d="M115.5 153 V166 C115.5 169, 117 170, 120 170 H129 M118 161 H140 M118 154 H134" stroke="#f2a66a" stroke-width="1" fill="none"/>
<path d="M132 151.5 L137 156 M137 151.5 L132 156" stroke="#f08a3a" stroke-width="1"/><circle cx="142.5" cy="161" r="1.6" fill="#f08a3a"/>
<circle cx="156.5" cy="160.2" r="3" fill="#62ad3a"/>
<text x="164.5" y="157.7" font-size="2.72" fill="#7c7c7c" font-family="Liberation Sans" textLength="28.0" lengthAdjust="spacingAndGlyphs">This is a sample text.</text><text x="164.5" y="160.9" font-size="2.72" fill="#7c7c7c" font-family="Liberation Sans" textLength="16.8" lengthAdjust="spacingAndGlyphs">Enter your text here</text>
</g>
<g>
<polyline points="82.2,267.1 107.2,244.8 123.2,257.8 139.9,246.3 159,243.6 182,231" fill="none" stroke="#8f8f8f" stroke-width="0.7"/>
<path d="M177 229.5 L184 229.6 L180.5 236 Z" fill="none" stroke="#3aa3b5" stroke-width="1"/>
<circle cx="82.2" cy="267.1" r="7.8" fill="#b32a12"/><circle cx="82.2" cy="267.1" r="6.2" fill="#d83a1a"/>
<rect x="79.5" y="264.5" width="5.5" height="5" fill="none" stroke="#fff" stroke-width="1"/>
<circle cx="107.2" cy="244.8" r="3" fill="#f7941d"/>
<circle cx="123.2" cy="257.8" r="5.7" fill="#1a78c2"/><path d="M121 260 L125.5 255.5" stroke="#fff" stroke-width="1"/>
<circle cx="139.9" cy="246.3" r="2.3" fill="#6aaa28"/>
<circle cx="159" cy="243.6" r="4.3" fill="#2a8aa5"/><circle cx="159" cy="243.6" r="3.2" fill="#4bb3c8"/>
<text x="75.8" y="240.9" font-size="7.5" font-weight="bold" fill="#e03a1e" letter-spacing="-0.3">01</text>
<text x="101.8" y="226.3" font-size="7.5" font-weight="bold" fill="#f7941d" letter-spacing="-0.3">02</text>
<text x="109.8" y="276" font-size="7.5" font-weight="bold" fill="#1a88d5" letter-spacing="-0.3">03</text>
<text x="145" y="260.3" font-size="7.5" font-weight="bold" fill="#6aaa28" letter-spacing="-0.3">04</text>
<text x="152.7" y="223" font-size="7.5" font-weight="bold" fill="#4fb9c5" letter-spacing="-0.3">05</text>
<text x="61.5" y="245.7" font-size="2.80" fill="#7c7c7c" font-family="Liberation Sans" textLength="22.0" lengthAdjust="spacingAndGlyphs">This is a sample</text><text x="61.5" y="249.0" font-size="2.80" fill="#7c7c7c" font-family="Liberation Sans" textLength="22.0" lengthAdjust="spacingAndGlyphs">text. Enter your</text><text x="70.3" y="252.3" font-size="2.80" fill="#7c7c7c" font-family="Liberation Sans" textLength="13.2" lengthAdjust="spacingAndGlyphs">text here</text>
<text x="87.5" y="229.7" font-size="2.80" fill="#7c7c7c" font-family="Liberation Sans" textLength="21.0" lengthAdjust="spacingAndGlyphs">This is a sample</text><text x="87.5" y="233.0" font-size="2.80" fill="#7c7c7c" font-family="Liberation Sans" textLength="21.0" lengthAdjust="spacingAndGlyphs">text. Enter your</text><text x="95.9" y="236.3" font-size="2.80" fill="#7c7c7c" font-family="Liberation Sans" textLength="12.6" lengthAdjust="spacingAndGlyphs">text here</text>
<text x="119.0" y="271.2" font-size="2.80" fill="#7c7c7c" font-family="Liberation Sans" textLength="22.0" lengthAdjust="spacingAndGlyphs">This is a sample</text><text x="119.0" y="274.5" font-size="2.80" fill="#7c7c7c" font-family="Liberation Sans" textLength="22.0" lengthAdjust="spacingAndGlyphs">text. Enter your</text><text x="119.0" y="277.8" font-size="2.80" fill="#7c7c7c" font-family="Liberation Sans" textLength="13.2" lengthAdjust="spacingAndGlyphs">text here</text>
<text x="154.5" y="254.7" font-size="2.80" fill="#7c7c7c" font-family="Liberation Sans" textLength="22.0" lengthAdjust="spacingAndGlyphs">This is a sample</text><text x="154.5" y="258.0" font-size="2.80" fill="#7c7c7c" font-family="Liberation Sans" textLength="22.0" lengthAdjust="spacingAndGlyphs">text. Enter your</text><text x="154.5" y="261.3" font-size="2.80" fill="#7c7c7c" font-family="Liberation Sans" textLength="13.2" lengthAdjust="spacingAndGlyphs">text here</text>
<text x="139.0" y="227.7" font-size="2.80" fill="#7c7c7c" font-family="Liberation Sans" textLength="22.0" lengthAdjust="spacingAndGlyphs">This is a sample</text><text x="139.0" y="231.0" font-size="2.80" fill="#7c7c7c" font-family="Liberation Sans" textLength="22.0" lengthAdjust="spacingAndGlyphs">text. Enter your</text><text x="147.8" y="234.3" font-size="2.80" fill="#7c7c7c" font-family="Liberation Sans" textLength="13.2" lengthAdjust="spacingAndGlyphs">text here</text>
</g>
<g>
<circle cx="121.8" cy="352.6" r="11.3" fill="none" stroke="#f7941d" stroke-width="1.4"/>
<circle cx="105.7" cy="369.6" r="11" fill="none" stroke="#e02a1a" stroke-width="1.4"/>
<circle cx="128.3" cy="375.2" r="11" fill="none" stroke="#6aaa28" stroke-width="1.4"/>
<path d="M117.5 348.5 L126 357 M126 348.5 L117.5 357" stroke="#f7941d" stroke-width="1.2"/>
<circle cx="105.7" cy="368.5" r="2.6" fill="#e02a1a"/><rect x="104.5" y="370.5" width="2.4" height="3" fill="#e02a1a"/>
<rect x="122" y="371.5" width="3.5" height="6" fill="none" stroke="#6aaa28" stroke-width="0.8"/><rect x="125" y="371" width="8" height="5.5" fill="none" stroke="#6aaa28" stroke-width="0.8"/>
<circle cx="99.5" cy="330.8" r="6" fill="#f7941d"/><text x="99.5" y="333.2" font-size="6.5" font-weight="bold" fill="#fff" text-anchor="middle">1</text>
<circle cx="144.2" cy="331.4" r="6" fill="#1a88d5"/><text x="144.2" y="333.79999999999995" font-size="6.5" font-weight="bold" fill="#fff" text-anchor="middle">4</text>
<circle cx="83.9" cy="369.9" r="6" fill="#e8391e"/><text x="83.9" y="372.29999999999995" font-size="6.5" font-weight="bold" fill="#fff" text-anchor="middle">2</text>
<circle cx="150.4" cy="373.7" r="6" fill="#6aaa28"/><text x="150.4" y="376.09999999999997" font-size="6.5" font-weight="bold" fill="#fff" text-anchor="middle">3</text>
<text x="104" y="344" font-size="5" fill="#f7941d" text-anchor="end">Title Goes Here</text>
<text x="139.7" y="345.5" font-size="5" fill="#1a88d5">Title Goes Here</text>
<text x="88" y="383" font-size="5" fill="#e8391e" text-anchor="end">Title Goes Here</text>
<text x="146.2" y="387.5" font-size="5" fill="#6aaa28">Title Goes Here</text>
<text x="53.0" y="347.7" font-size="3.10" fill="#7c7c7c" font-family="Liberation Sans" textLength="51.0" lengthAdjust="spacingAndGlyphs">This is a sample text. You can replace</text><text x="73.4" y="351.5" font-size="3.10" fill="#7c7c7c" font-family="Liberation Sans" textLength="30.6" lengthAdjust="spacingAndGlyphs">this text. Enter your text here.</text>
<text x="139.7" y="350.2" font-size="3.10" fill="#7c7c7c" font-family="Liberation Sans" textLength="43.0" lengthAdjust="spacingAndGlyphs">This is a sample text. You can replace</text><text x="139.7" y="354.0" font-size="3.10" fill="#7c7c7c" font-family="Liberation Sans" textLength="43.0" lengthAdjust="spacingAndGlyphs">this text. Enter your text here.</text><text x="139.7" y="357.8" font-size="3.10" fill="#7c7c7c" font-family="Liberation Sans" textLength="25.8" lengthAdjust="spacingAndGlyphs">here. Enter your text here today ok</text>
<text x="45.0" y="386.7" font-size="3.10" fill="#7c7c7c" font-family="Liberation Sans" textLength="43.0" lengthAdjust="spacingAndGlyphs">This is a sample text. You can replace</text><text x="45.0" y="390.5" font-size="3.10" fill="#7c7c7c" font-family="Liberation Sans" textLength="43.0" lengthAdjust="spacingAndGlyphs">this text. Enter your text here.</text><text x="62.2" y="394.3" font-size="3.10" fill="#7c7c7c" font-family="Liberation Sans" textLength="25.8" lengthAdjust="spacingAndGlyphs">here. Enter your text here today ok</text>
<text x="146.0" y="391.7" font-size="3.10" fill="#7c7c7c" font-family="Liberation Sans" textLength="43.0" lengthAdjust="spacingAndGlyphs">This is a sample text. You can replace</text><text x="146.0" y="395.5" font-size="3.10" fill="#7c7c7c" font-family="Liberation Sans" textLength="43.0" lengthAdjust="spacingAndGlyphs">this text. Enter your text here.</text><text x="146.0" y="399.3" font-size="3.10" fill="#7c7c7c" font-family="Liberation Sans" textLength="25.8" lengthAdjust="spacingAndGlyphs">here. Enter your text here today ok</text>
</g>
<g>
<path d="M145.30 474.00 A23.5 23.5 0 0 1 121.80 497.50 L121.80 491.50 A17.5 17.5 0 0 0 139.30 474.00 Z" fill="#6aaa28"/>
<path d="M121.8 491.5 L121.8 497.5 L133 511 L137 506 L136.5 494 Z" fill="#3c7a1a"/>
<path d="M139.30 474.00 A17.5 17.5 0 0 1 104.30 474.00 L110.30 474.00 A11.5 11.5 0 0 0 133.30 474.00 Z" fill="#e8922a"/>
<path d="M91.4 476.2 L97.5 492.5 L102 474 L104.3 474 L101 476 Z" fill="#d98424"/>
<circle cx="121.8" cy="474" r="11.8" fill="#2a92d8"/><circle cx="121.8" cy="474" r="6.2" fill="#e4401e"/>
<path d="M102.1 447 L109 462.5 L121 462.5 L121.8 462.2 L115 456 Z" fill="#17609c"/>
<path d="M131.9 457.2 L127.5 470 L122 474 L121.8 468 Z" fill="#b8301a"/>
<rect x="70.5" y="447" width="31.6" height="13.7" rx="6.8" fill="#1a88d5"/><rect x="90" y="447" width="12" height="13.7" fill="#1a88d5"/>
<circle cx="76.5" cy="453.8" r="4.5" fill="#fff"/>
<rect x="131.9" y="457.1" width="27.4" height="11.4" rx="5.7" fill="#e8391e"/><rect x="131.9" y="457.1" width="12" height="11.4" fill="#e8391e"/>
<circle cx="153.4" cy="462.8" r="4" fill="#fff"/>
<rect x="60.4" y="476.2" width="31" height="13.7" rx="6.8" fill="#f7941d"/><rect x="80" y="476.2" width="11.4" height="13.7" fill="#f7941d"/>
<circle cx="67" cy="483" r="4.5" fill="#fff"/>
<rect x="137.9" y="492.3" width="31" height="13.7" rx="6.8" fill="#6aaa28"/><rect x="137.9" y="492.3" width="12" height="13.7" fill="#6aaa28"/>
<circle cx="163.5" cy="499.2" r="4.5" fill="#fff"/>
<text x="91.5" y="444" font-size="5.5" font-weight="bold" fill="#1a88d5">75%</text>
<text x="133" y="455" font-size="5.5" font-weight="bold" fill="#e8391e">100%</text>
<text x="83" y="474" font-size="5.5" font-weight="bold" fill="#f7941d">50%</text>
<text x="148.5" y="490" font-size="5.5" font-weight="bold" fill="#6aaa28">25%</text>
<text x="82.0" y="452.7" font-size="3.06" fill="#fff" font-family="Liberation Sans" textLength="13.0" lengthAdjust="spacingAndGlyphs">Enter your</text><text x="82.0" y="456.3" font-size="3.06" fill="#fff" font-family="Liberation Sans" textLength="7.8" lengthAdjust="spacingAndGlyphs">text here</text>
<text x="134.5" y="462.2" font-size="3.06" fill="#fff" font-family="Liberation Sans" textLength="13.0" lengthAdjust="spacingAndGlyphs">Enter your</text><text x="134.5" y="465.8" font-size="3.06" fill="#fff" font-family="Liberation Sans" textLength="7.8" lengthAdjust="spacingAndGlyphs">text here</text>
<text x="73.5" y="482.2" font-size="3.06" fill="#fff" font-family="Liberation Sans" textLength="13.0" lengthAdjust="spacingAndGlyphs">Enter your</text><text x="73.5" y="485.8" font-size="3.06" fill="#fff" font-family="Liberation Sans" textLength="7.8" lengthAdjust="spacingAndGlyphs">text here</text>
<text x="142.0" y="498.7" font-size="3.06" fill="#fff" font-family="Liberation Sans" textLength="13.0" lengthAdjust="spacingAndGlyphs">Enter your</text><text x="142.0" y="502.3" font-size="3.06" fill="#fff" font-family="Liberation Sans" textLength="7.8" lengthAdjust="spacingAndGlyphs">text here</text>
<text x="44.0" y="449.7" font-size="3.10" fill="#7c7c7c" font-family="Liberation Sans" textLength="22.0" lengthAdjust="spacingAndGlyphs">This is a sample</text><text x="44.0" y="453.5" font-size="3.10" fill="#7c7c7c" font-family="Liberation Sans" textLength="22.0" lengthAdjust="spacingAndGlyphs">text. Enter your</text><text x="52.8" y="457.3" font-size="3.10" fill="#7c7c7c" font-family="Liberation Sans" textLength="13.2" lengthAdjust="spacingAndGlyphs">text here</text>
<text x="163.5" y="459.7" font-size="3.10" fill="#7c7c7c" font-family="Liberation Sans" textLength="22.0" lengthAdjust="spacingAndGlyphs">This is a sample</text><text x="163.5" y="463.5" font-size="3.10" fill="#7c7c7c" font-family="Liberation Sans" textLength="22.0" lengthAdjust="spacingAndGlyphs">text. Enter your</text><text x="163.5" y="467.3" font-size="3.10" fill="#7c7c7c" font-family="Liberation Sans" textLength="13.2" lengthAdjust="spacingAndGlyphs">text here</text>
<text x="66.5" y="495.7" font-size="3.10" fill="#7c7c7c" font-family="Liberation Sans" textLength="22.0" lengthAdjust="spacingAndGlyphs">This is a sample</text><text x="66.5" y="499.5" font-size="3.10" fill="#7c7c7c" font-family="Liberation Sans" textLength="22.0" lengthAdjust="spacingAndGlyphs">text. Enter your</text><text x="75.3" y="503.3" font-size="3.10" fill="#7c7c7c" font-family="Liberation Sans" textLength="13.2" lengthAdjust="spacingAndGlyphs">text here</text>
<text x="172.0" y="495.7" font-size="3.10" fill="#7c7c7c" font-family="Liberation Sans" textLength="22.0" lengthAdjust="spacingAndGlyphs">This is a sample</text><text x="172.0" y="499.5" font-size="3.10" fill="#7c7c7c" font-family="Liberation Sans" textLength="22.0" lengthAdjust="spacingAndGlyphs">text. Enter your</text><text x="172.0" y="503.3" font-size="3.10" fill="#7c7c7c" font-family="Liberation Sans" textLength="13.2" lengthAdjust="spacingAndGlyphs">text here</text>
</g>
<g>
<text x="119.1" y="671.6" font-size="8" fill="#3a3a3a" text-anchor="middle">Title Goes Here</text>
<rect x="61.3" y="679" width="9" height="45.5" rx="4.5" fill="#fff" stroke="#d2d2d2" stroke-width="0.6"/>
<ellipse cx="65.8" cy="680.5" rx="4.3" ry="1.6" fill="#fff" stroke="#d2d2d2" stroke-width="0.5"/>
<rect x="63.0" y="691.9" width="5.6" height="31.0" rx="1.5" fill="#e8391e"/>
<ellipse cx="65.8" cy="692.7" rx="2.8" ry="1.2" fill="#a82a10"/>
<text x="58.8" y="730.2" font-size="3.10" fill="#7c7c7c" font-family="Liberation Sans" textLength="14.0" lengthAdjust="spacingAndGlyphs">This is a sample text.</text><text x="58.8" y="733.9" font-size="3.10" fill="#7c7c7c" font-family="Liberation Sans" textLength="8.4" lengthAdjust="spacingAndGlyphs">Enter your text here</text>
<rect x="82.8" y="679" width="9" height="45.5" rx="4.5" fill="#fff" stroke="#d2d2d2" stroke-width="0.6"/>
<ellipse cx="87.3" cy="680.5" rx="4.3" ry="1.6" fill="#fff" stroke="#d2d2d2" stroke-width="0.5"/>
<rect x="84.5" y="703.8" width="5.6" height="19.1" rx="1.5" fill="#f7941d"/>
<ellipse cx="87.3" cy="704.6" rx="2.8" ry="1.2" fill="#b86a10"/>
<text x="80.3" y="730.2" font-size="3.10" fill="#7c7c7c" font-family="Liberation Sans" textLength="14.0" lengthAdjust="spacingAndGlyphs">This is a sample text.</text><text x="80.3" y="733.9" font-size="3.10" fill="#7c7c7c" font-family="Liberation Sans" textLength="8.4" lengthAdjust="spacingAndGlyphs">Enter your text here</text>
<rect x="104.3" y="679" width="9" height="45.5" rx="4.5" fill="#fff" stroke="#d2d2d2" stroke-width="0.6"/>
<ellipse cx="108.8" cy="680.5" rx="4.3" ry="1.6" fill="#fff" stroke="#d2d2d2" stroke-width="0.5"/>
<rect x="106.0" y="696.6" width="5.6" height="26.3" rx="1.5" fill="#6aaa28"/>
<ellipse cx="108.8" cy="697.4" rx="2.8" ry="1.2" fill="#3e7a18"/>
<text x="101.8" y="730.2" font-size="3.10" fill="#7c7c7c" font-family="Liberation Sans" textLength="14.0" lengthAdjust="spacingAndGlyphs">This is a sample text.</text><text x="101.8" y="733.9" font-size="3.10" fill="#7c7c7c" font-family="Liberation Sans" textLength="8.4" lengthAdjust="spacingAndGlyphs">Enter your text here</text>
<rect x="125.9" y="679" width="9" height="45.5" rx="4.5" fill="#fff" stroke="#d2d2d2" stroke-width="0.6"/>
<ellipse cx="130.4" cy="680.5" rx="4.3" ry="1.6" fill="#fff" stroke="#d2d2d2" stroke-width="0.5"/>
<rect x="127.6" y="688.3" width="5.6" height="34.6" rx="1.5" fill="#1a88d5"/>
<ellipse cx="130.4" cy="689.1" rx="2.8" ry="1.2" fill="#0f5f9a"/>
<text x="123.4" y="730.2" font-size="3.10" fill="#7c7c7c" font-family="Liberation Sans" textLength="14.0" lengthAdjust="spacingAndGlyphs">This is a sample text.</text><text x="123.4" y="733.9" font-size="3.10" fill="#7c7c7c" font-family="Liberation Sans" textLength="8.4" lengthAdjust="spacingAndGlyphs">Enter your text here</text>
<rect x="147.4" y="679" width="9" height="45.5" rx="4.5" fill="#fff" stroke="#d2d2d2" stroke-width="0.6"/>
<ellipse cx="151.9" cy="680.5" rx="4.3" ry="1.6" fill="#fff" stroke="#d2d2d2" stroke-width="0.5"/>
<rect x="149.1" y="691.9" width="5.6" height="31.0" rx="1.5" fill="#4fb9c5"/>
<ellipse cx="151.9" cy="692.7" rx="2.8" ry="1.2" fill="#2a8a95"/>
<text x="144.9" y="730.2" font-size="3.10" fill="#7c7c7c" font-family="Liberation Sans" textLength="14.0" lengthAdjust="spacingAndGlyphs">This is a sample text.</text><text x="144.9" y="733.9" font-size="3.10" fill="#7c7c7c" font-family="Liberation Sans" textLength="8.4" lengthAdjust="spacingAndGlyphs">Enter your text here</text>
<rect x="168.9" y="679" width="9" height="45.5" rx="4.5" fill="#fff" stroke="#d2d2d2" stroke-width="0.6"/>
<ellipse cx="173.4" cy="680.5" rx="4.3" ry="1.6" fill="#fff" stroke="#d2d2d2" stroke-width="0.5"/>
<rect x="170.6" y="700.8" width="5.6" height="22.1" rx="1.5" fill="#6a0f5e"/>
<ellipse cx="173.4" cy="701.6" rx="2.8" ry="1.2" fill="#4a0a40"/>
<text x="166.4" y="730.2" font-size="3.10" fill="#7c7c7c" font-family="Liberation Sans" textLength="14.0" lengthAdjust="spacingAndGlyphs">This is a sample text.</text><text x="166.4" y="733.9" font-size="3.10" fill="#7c7c7c" font-family="Liberation Sans" textLength="8.4" lengthAdjust="spacingAndGlyphs">Enter your text here</text>
</g>
<g>
<path d="M110.4 788.8 V783 C110.4 774.5, 128.2 774.5, 128.2 783 V788.8 Z" fill="#e2eff6"/>
<rect x="110.4" y="788.8" width="17.8" height="11.7" fill="#e8391e"/><rect x="110.4" y="788.8" width="3" height="11.7" fill="#f07a62"/>
<rect x="110.4" y="800.5" width="17.8" height="12.3" fill="#6aaa28"/><rect x="110.4" y="800.5" width="3" height="12.3" fill="#9ccc6a"/><rect x="125" y="800.5" width="3.2" height="12.3" fill="#2e5a14"/>
<rect x="110.4" y="812.8" width="17.8" height="12.1" fill="#4fb9c5"/><rect x="125" y="812.8" width="3.2" height="12.1" fill="#2a6a72"/>
<path d="M110.4 824.9 H128.2 V837.5 C124 835, 114 835, 110.4 837.5 Z" fill="#1a88d5"/><rect x="110.4" y="824.9" width="3" height="12" fill="#6ab8ea"/>
<path d="M110.4 837.5 L119.3 852 L128.2 837.5 C124 835, 114 835, 110.4 837.5 Z" fill="#e6e6e6"/>
<path d="M116 845 L122.6 845 L119.3 850.5 Z" fill="#6a6a6a"/>
<path d="M89.4 797.1 H110" stroke="#e8391e" stroke-width="0.7"/><circle cx="89.4" cy="797.1" r="0.8" fill="#e8391e"/>
<path d="M128 809.7 H150.6" stroke="#8cc85a" stroke-width="0.7"/><circle cx="150.6" cy="809.7" r="0.8" fill="#6aaa28"/>
<path d="M89.4 821 H110" stroke="#80ccd5" stroke-width="0.7"/>
<path d="M128 833.5 H150.6" stroke="#5aa8e0" stroke-width="0.7"/>
<circle cx="104.5" cy="791.5" r="2.6" fill="#e8391e"/><circle cx="134.6" cy="802" r="2" fill="none" stroke="#8cc85a" stroke-width="0.8"/>
<circle cx="104.5" cy="816" r="2.2" fill="#4fb9c5"/><path d="M133 828 L135 824 L137 828 Z" fill="none" stroke="#1a88d5" stroke-width="0.8"/>
<text x="63.0" y="793.2" font-size="3.10" fill="#7c7c7c" font-family="Liberation Sans" textLength="22.0" lengthAdjust="spacingAndGlyphs">This is a sample</text><text x="63.0" y="797.0" font-size="3.10" fill="#7c7c7c" font-family="Liberation Sans" textLength="22.0" lengthAdjust="spacingAndGlyphs">text. Enter your</text><text x="71.8" y="800.8" font-size="3.10" fill="#7c7c7c" font-family="Liberation Sans" textLength="13.2" lengthAdjust="spacingAndGlyphs">text here</text>
<text x="63.0" y="816.7" font-size="3.10" fill="#7c7c7c" font-family="Liberation Sans" textLength="22.0" lengthAdjust="spacingAndGlyphs">This is a sample</text><text x="63.0" y="820.5" font-size="3.10" fill="#7c7c7c" font-family="Liberation Sans" textLength="22.0" lengthAdjust="spacingAndGlyphs">text. Enter your</text><text x="71.8" y="824.3" font-size="3.10" fill="#7c7c7c" font-family="Liberation Sans" textLength="13.2" lengthAdjust="spacingAndGlyphs">text here</text>
<text x="153.0" y="806.2" font-size="3.10" fill="#7c7c7c" font-family="Liberation Sans" textLength="22.0" lengthAdjust="spacingAndGlyphs">This is a sample</text><text x="153.0" y="810.0" font-size="3.10" fill="#7c7c7c" font-family="Liberation Sans" textLength="22.0" lengthAdjust="spacingAndGlyphs">text. Enter your</text><text x="153.0" y="813.8" font-size="3.10" fill="#7c7c7c" font-family="Liberation Sans" textLength="13.2" lengthAdjust="spacingAndGlyphs">text here</text>
<text x="153.0" y="829.2" font-size="3.10" fill="#7c7c7c" font-family="Liberation Sans" textLength="22.0" lengthAdjust="spacingAndGlyphs">This is a sample</text><text x="153.0" y="833.0" font-size="3.10" fill="#7c7c7c" font-family="Liberation Sans" textLength="22.0" lengthAdjust="spacingAndGlyphs">text. Enter your</text><text x="153.0" y="836.8" font-size="3.10" fill="#7c7c7c" font-family="Liberation Sans" textLength="13.2" lengthAdjust="spacingAndGlyphs">text here</text>
</g>
<path d="M101.5 889 V897" stroke="#f7941d" stroke-width="0.8"/><circle cx="101.5" cy="889" r="0.9" fill="#f7941d"/>
<text x="102.5" y="897" font-size="6" fill="#f7941d">70%</text>
<text x="87.0" y="892.2" font-size="2.89" fill="#7c7c7c" font-family="Liberation Sans" textLength="12.0" lengthAdjust="spacingAndGlyphs">This is a sample text.</text><text x="91.8" y="895.6" font-size="2.89" fill="#7c7c7c" font-family="Liberation Sans" textLength="7.2" lengthAdjust="spacingAndGlyphs">Enter your text here</text>
</svg>
<div class="a" style="left:36.5px;top:540px;width:166px;height:94px;overflow:hidden;background:#f7f7f7">
<div class="a" style="left:0;top:0;width:1215px;height:684px;transform:scale(0.13663);transform-origin:0 0">
<div class="a" style="left:-315px;top:-180px;width:1600px;height:923px">
<svg class="a" style="left:315px;top:180px" width="1215" height="684" viewBox="315 180 1215 684">
<line x1="619" y1="439.5" x2="765" y2="439.5" stroke="#e8391e" stroke-width="1"/>
<line x1="619" y1="570.5" x2="765" y2="570.5" stroke="#6aaa28" stroke-width="1"/>
<line x1="619" y1="698.5" x2="765" y2="698.5" stroke="#4fb9c5" stroke-width="1"/>
<line x1="1078" y1="514.5" x2="1226" y2="514.5" stroke="#f7941d" stroke-width="1"/>
<line x1="1078" y1="642.5" x2="1226" y2="642.5" stroke="#1a88d5" stroke-width="1"/>
<polygon points="366,439 619,439 581,483 366,483" fill="#e83b1b"/>
<polygon points="366,570.5 619,570.5 581,613 366,613" fill="#6aab26"/>
<polygon points="366,698 619,698 581,741 366,741" fill="#4eb8c4"/>
<polygon points="1225,514.5 1480,514.5 1480,558.5 1264,558.5" fill="#f7941d"/>
<polygon points="1225,642 1480,642 1480,686 1264,686" fill="#1a88d5"/>
</svg>
<svg class="a" style="left:720px;top:350px" width="400" height="480" viewBox="720 350 400 480">
<defs><filter id="t_blur" x="-40%" y="-40%" width="180%" height="180%"><feGaussianBlur stdDeviation="9"/></filter>
<filter id="t_blur2" x="-40%" y="-40%" width="180%" height="180%"><feGaussianBlur stdDeviation="4"/></filter>
<linearGradient id="t_gteal" gradientUnits="userSpaceOnUse" x1="860" y1="636" x2="960" y2="771"><stop offset="0" stop-color="#3a8f9a"/><stop offset="0.6" stop-color="#5bbfc8"/><stop offset="1" stop-color="#5bbfc8"/></linearGradient>
<radialGradient id="t_hteal" gradientUnits="userSpaceOnUse" cx="990" cy="734" r="95" gradientTransform="translate(990 734) rotate(-24) scale(1 0.42) translate(-990 -734)"><stop offset="0" stop-color="#8ad6dc" stop-opacity="0.95"/><stop offset="1" stop-color="#8ad6dc" stop-opacity="0"/></radialGradient>
<linearGradient id="t_gblue" gradientUnits="userSpaceOnUse" x1="860" y1="572" x2="960" y2="707"><stop offset="0" stop-color="#136aad"/><stop offset="0.6" stop-color="#2595dc"/><stop offset="1" stop-color="#2595dc"/></linearGradient>
<radialGradient id="t_hblue" gradientUnits="userSpaceOnUse" cx="990" cy="670" r="95" gradientTransform="translate(990 670) rotate(-24) scale(1 0.42) translate(-990 -670)"><stop offset="0" stop-color="#5ab6ee" stop-opacity="0.95"/><stop offset="1" stop-color="#5ab6ee" stop-opacity="0"/></radialGradient>
<linearGradient id="t_ggreen" gradientUnits="userSpaceOnUse" x1="860" y1="508" x2="960" y2="643"><stop offset="0" stop-color="#4a8a1c"/><stop offset="0.6" stop-color="#6db52d"/><stop offset="1" stop-color="#6db52d"/></linearGradient>
<radialGradient id="t_hgreen" gradientUnits="userSpaceOnUse" cx="990" cy="606" r="95" gradientTransform="translate(990 606) rotate(-24) scale(1 0.42) translate(-990 -606)"><stop offset="0" stop-color="#a0d462" stop-opacity="0.95"/><stop offset="1" stop-color="#a0d462" stop-opacity="0"/></radialGradient>
<linearGradient id="t_gorange" gradientUnits="userSpaceOnUse" x1="860" y1="444" x2="960" y2="579"><stop offset="0" stop-color="#c87418"/><stop offset="0.6" stop-color="#f29a30"/><stop offset="1" stop-color="#f29a30"/></linearGradient>
<radialGradient id="t_horange" gradientUnits="userSpaceOnUse" cx="990" cy="542" r="95" gradientTransform="translate(990 542) rotate(-24) scale(1 0.42) translate(-990 -542)"><stop offset="0" stop-color="#f9bc6c" stop-opacity="0.95"/><stop offset="1" stop-color="#f9bc6c" stop-opacity="0"/></radialGradient>
<linearGradient id="t_gred" gradientUnits="userSpaceOnUse" x1="860" y1="380" x2="960" y2="515"><stop offset="0" stop-color="#b3321a"/><stop offset="0.6" stop-color="#ea4a22"/><stop offset="1" stop-color="#ea4a22"/></linearGradient>
<radialGradient id="t_hred" gradientUnits="userSpaceOnUse" cx="990" cy="478" r="95" gradientTransform="translate(990 478) rotate(-24) scale(1 0.42) translate(-990 -478)"><stop offset="0" stop-color="#f37a60" stop-opacity="0.95"/><stop offset="1" stop-color="#f37a60" stop-opacity="0"/></radialGradient>
</defs>
<polygon points="760,689 920,628 1083,700 1083,712 922,789.5 760,702" fill="#2e646c"/>
<polygon points="921.5,775 1083,699 1083,712 922,789.5" fill="#50b0b8"/>
<polygon points="920,628 1083,700 922,776 760,689" fill="url(#t_gteal)"/>
<polygon points="920,628 1083,700 922,776 760,689" fill="url(#t_hteal)"/>
<polygon points="920,582 1086,656 922,742 758,648" fill="#1a1a1a" opacity="0.5" filter="url(#t_blur)"/>
<polygon points="920,574 1084,647 922,733 759,638" fill="#000" opacity="0.45" filter="url(#t_blur2)"/>
<polygon points="760,625 920,564 1083,636 1083,648 922,725.5 760,638" fill="#135689"/>
<polygon points="921.5,711 1083,635 1083,648 922,725.5" fill="#228cd2"/>
<polygon points="920,564 1083,636 922,712 760,625" fill="url(#t_gblue)"/>
<polygon points="920,564 1083,636 922,712 760,625" fill="url(#t_hblue)"/>
<polygon points="920,518 1086,592 922,678 758,584" fill="#1a1a1a" opacity="0.5" filter="url(#t_blur)"/>
<polygon points="920,510 1084,583 922,669 759,574" fill="#000" opacity="0.45" filter="url(#t_blur2)"/>
<polygon points="760,561 920,500 1083,572 1083,584 922,661.5 760,574" fill="#386c14"/>
<polygon points="921.5,647 1083,571 1083,584 922,661.5" fill="#68ae2c"/>
<polygon points="920,500 1083,572 922,648 760,561" fill="url(#t_ggreen)"/>
<polygon points="920,500 1083,572 922,648 760,561" fill="url(#t_hgreen)"/>
<polygon points="920,454 1086,528 922,614 758,520" fill="#1a1a1a" opacity="0.5" filter="url(#t_blur)"/>
<polygon points="920,446 1084,519 922,605 759,510" fill="#000" opacity="0.45" filter="url(#t_blur2)"/>
<polygon points="760,497 920,436 1083,508 1083,520 922,597.5 760,510" fill="#905414"/>
<polygon points="921.5,583 1083,507 1083,520 922,597.5" fill="#e48e2c"/>
<polygon points="920,436 1083,508 922,584 760,497" fill="url(#t_gorange)"/>
<polygon points="920,436 1083,508 922,584 760,497" fill="url(#t_horange)"/>
<polygon points="920,390 1086,464 922,550 758,456" fill="#1a1a1a" opacity="0.5" filter="url(#t_blur)"/>
<polygon points="920,382 1084,455 922,541 759,446" fill="#000" opacity="0.45" filter="url(#t_blur2)"/>
<polygon points="760,433 920,372 1083,444 1083,456 922,533.5 760,446" fill="#7e200e"/>
<polygon points="921.5,519 1083,443 1083,456 922,533.5" fill="#dc4626"/>
<polygon points="920,372 1083,444 922,520 760,433" fill="url(#t_gred)"/>
<polygon points="920,372 1083,444 922,520 760,433" fill="url(#t_hred)"/>
</svg>
<div class="a" style="left:728.5px;top:271px;font-size:56px;line-height:1;color:#404040;white-space:nowrap">Title Goes Here</div>
<div class="a stt" style="left:365px;top:397px;color:#e8391e">Section Title Goes Here</div>
<div class="a stt" style="left:365px;top:527px;color:#6aaa28">Section Title Goes Here</div>
<div class="a stt" style="left:365px;top:655px;color:#4fb9c5">Section Title Goes Here</div>
<div class="a stt" style="left:1157px;top:473px;color:#f7941d">Section Title Goes Here</div>
<div class="a stt" style="left:1157px;top:600px;color:#1a88d5">Section Title Goes Here</div>
<div class="a ett" style="left:393.5px;top:450px">Enter Text Here</div>
<div class="a ett" style="left:393.5px;top:580px">Enter Text Here</div>
<div class="a ett" style="left:393.5px;top:708px">Enter Text Here</div>
<div class="a ett" style="left:1310.5px;top:526px">Enter Text Here</div>
<div class="a ett" style="left:1310.5px;top:654px">Enter Text Here</div>
</div></div></div>
<div id="canvas"></div>
<div id="slide"></div>

<svg class="a" style="left:315px;top:180px" width="1215" height="684" viewBox="315 180 1215 684">
<line x1="619" y1="439.5" x2="765" y2="439.5" stroke="#e8391e" stroke-width="1"/>
<line x1="619" y1="570.5" x2="765" y2="570.5" stroke="#6aaa28" stroke-width="1"/>
<line x1="619" y1="698.5" x2="765" y2="698.5" stroke="#4fb9c5" stroke-width="1"/>
<line x1="1078" y1="514.5" x2="1226" y2="514.5" stroke="#f7941d" stroke-width="1"/>
<line x1="1078" y1="642.5" x2="1226" y2="642.5" stroke="#1a88d5" stroke-width="1"/>
<polygon points="366,439 619,439 581,483 366,483" fill="#e83b1b"/>
<polygon points="366,570.5 619,570.5 581,613 366,613" fill="#6aab26"/>
<polygon points="366,698 619,698 581,741 366,741" fill="#4eb8c4"/>
<polygon points="1225,514.5 1480,514.5 1480,558.5 1264,558.5" fill="#f7941d"/>
<polygon points="1225,642 1480,642 1480,686 1264,686" fill="#1a88d5"/>
</svg>
<svg class="a" style="left:720px;top:350px" width="400" height="480" viewBox="720 350 400 480">
<defs><filter id="blur" x="-40%" y="-40%" width="180%" height="180%"><feGaussianBlur stdDeviation="9"/></filter>
<filter id="blur2" x="-40%" y="-40%" width="180%" height="180%"><feGaussianBlur stdDeviation="4"/></filter>
<linearGradient id="gteal" gradientUnits="userSpaceOnUse" x1="860" y1="636" x2="960" y2="771"><stop offset="0" stop-color="#3a8f9a"/><stop offset="0.6" stop-color="#5bbfc8"/><stop offset="1" stop-color="#5bbfc8"/></linearGradient>
<radialGradient id="hteal" gradientUnits="userSpaceOnUse" cx="990" cy="734" r="95" gradientTransform="translate(990 734) rotate(-24) scale(1 0.42) translate(-990 -734)"><stop offset="0" stop-color="#8ad6dc" stop-opacity="0.95"/><stop offset="1" stop-color="#8ad6dc" stop-opacity="0"/></radialGradient>
<linearGradient id="gblue" gradientUnits="userSpaceOnUse" x1="860" y1="572" x2="960" y2="707"><stop offset="0" stop-color="#136aad"/><stop offset="0.6" stop-color="#2595dc"/><stop offset="1" stop-color="#2595dc"/></linearGradient>
<radialGradient id="hblue" gradientUnits="userSpaceOnUse" cx="990" cy="670" r="95" gradientTransform="translate(990 670) rotate(-24) scale(1 0.42) translate(-990 -670)"><stop offset="0" stop-color="#5ab6ee" stop-opacity="0.95"/><stop offset="1" stop-color="#5ab6ee" stop-opacity="0"/></radialGradient>
<linearGradient id="ggreen" gradientUnits="userSpaceOnUse" x1="860" y1="508" x2="960" y2="643"><stop offset="0" stop-color="#4a8a1c"/><stop offset="0.6" stop-color="#6db52d"/><stop offset="1" stop-color="#6db52d"/></linearGradient>
<radialGradient id="hgreen" gradientUnits="userSpaceOnUse" cx="990" cy="606" r="95" gradientTransform="translate(990 606) rotate(-24) scale(1 0.42) translate(-990 -606)"><stop offset="0" stop-color="#a0d462" stop-opacity="0.95"/><stop offset="1" stop-color="#a0d462" stop-opacity="0"/></radialGradient>
<linearGradient id="gorange" gradientUnits="userSpaceOnUse" x1="860" y1="444" x2="960" y2="579"><stop offset="0" stop-color="#c87418"/><stop offset="0.6" stop-color="#f29a30"/><stop offset="1" stop-color="#f29a30"/></linearGradient>
<radialGradient id="horange" gradientUnits="userSpaceOnUse" cx="990" cy="542" r="95" gradientTransform="translate(990 542) rotate(-24) scale(1 0.42) translate(-990 -542)"><stop offset="0" stop-color="#f9bc6c" stop-opacity="0.95"/><stop offset="1" stop-color="#f9bc6c" stop-opacity="0"/></radialGradient>
<linearGradient id="gred" gradientUnits="userSpaceOnUse" x1="860" y1="380" x2="960" y2="515"><stop offset="0" stop-color="#b3321a"/><stop offset="0.6" stop-color="#ea4a22"/><stop offset="1" stop-color="#ea4a22"/></linearGradient>
<radialGradient id="hred" gradientUnits="userSpaceOnUse" cx="990" cy="478" r="95" gradientTransform="translate(990 478) rotate(-24) scale(1 0.42) translate(-990 -478)"><stop offset="0" stop-color="#f37a60" stop-opacity="0.95"/><stop offset="1" stop-color="#f37a60" stop-opacity="0"/></radialGradient>
</defs>
<polygon points="760,689 920,628 1083,700 1083,712 922,789.5 760,702" fill="#2e646c"/>
<polygon points="921.5,775 1083,699 1083,712 922,789.5" fill="#50b0b8"/>
<polygon points="920,628 1083,700 922,776 760,689" fill="url(#gteal)"/>
<polygon points="920,628 1083,700 922,776 760,689" fill="url(#hteal)"/>
<polygon points="920,582 1086,656 922,742 758,648" fill="#1a1a1a" opacity="0.5" filter="url(#blur)"/>
<polygon points="920,574 1084,647 922,733 759,638" fill="#000" opacity="0.45" filter="url(#blur2)"/>
<polygon points="760,625 920,564 1083,636 1083,648 922,725.5 760,638" fill="#135689"/>
<polygon points="921.5,711 1083,635 1083,648 922,725.5" fill="#228cd2"/>
<polygon points="920,564 1083,636 922,712 760,625" fill="url(#gblue)"/>
<polygon points="920,564 1083,636 922,712 760,625" fill="url(#hblue)"/>
<polygon points="920,518 1086,592 922,678 758,584" fill="#1a1a1a" opacity="0.5" filter="url(#blur)"/>
<polygon points="920,510 1084,583 922,669 759,574" fill="#000" opacity="0.45" filter="url(#blur2)"/>
<polygon points="760,561 920,500 1083,572 1083,584 922,661.5 760,574" fill="#386c14"/>
<polygon points="921.5,647 1083,571 1083,584 922,661.5" fill="#68ae2c"/>
<polygon points="920,500 1083,572 922,648 760,561" fill="url(#ggreen)"/>
<polygon points="920,500 1083,572 922,648 760,561" fill="url(#hgreen)"/>
<polygon points="920,454 1086,528 922,614 758,520" fill="#1a1a1a" opacity="0.5" filter="url(#blur)"/>
<polygon points="920,446 1084,519 922,605 759,510" fill="#000" opacity="0.45" filter="url(#blur2)"/>
<polygon points="760,497 920,436 1083,508 1083,520 922,597.5 760,510" fill="#905414"/>
<polygon points="921.5,583 1083,507 1083,520 922,597.5" fill="#e48e2c"/>
<polygon points="920,436 1083,508 922,584 760,497" fill="url(#gorange)"/>
<polygon points="920,436 1083,508 922,584 760,497" fill="url(#horange)"/>
<polygon points="920,390 1086,464 922,550 758,456" fill="#1a1a1a" opacity="0.5" filter="url(#blur)"/>
<polygon points="920,382 1084,455 922,541 759,446" fill="#000" opacity="0.45" filter="url(#blur2)"/>
<polygon points="760,433 920,372 1083,444 1083,456 922,533.5 760,446" fill="#7e200e"/>
<polygon points="921.5,519 1083,443 1083,456 922,533.5" fill="#dc4626"/>
<polygon points="920,372 1083,444 922,520 760,433" fill="url(#gred)"/>
<polygon points="920,372 1083,444 922,520 760,433" fill="url(#hred)"/>
</svg>
<div class="a" style="left:728.5px;top:271px;font-size:56px;line-height:1;color:#404040;white-space:nowrap">Title Goes Here</div>
<div class="a stt" style="left:365px;top:397px;color:#e8391e">Section Title Goes Here</div>
<div class="a stt" style="left:365px;top:527px;color:#6aaa28">Section Title Goes Here</div>
<div class="a stt" style="left:365px;top:655px;color:#4fb9c5">Section Title Goes Here</div>
<div class="a stt" style="left:1157px;top:473px;color:#f7941d">Section Title Goes Here</div>
<div class="a stt" style="left:1157px;top:600px;color:#1a88d5">Section Title Goes Here</div>
<div class="a ett" style="left:393.5px;top:450px">Enter Text Here</div>
<div class="a ett" style="left:393.5px;top:580px">Enter Text Here</div>
<div class="a ett" style="left:393.5px;top:708px">Enter Text Here</div>
<div class="a ett" style="left:1310.5px;top:526px">Enter Text Here</div>
<div class="a ett" style="left:1310.5px;top:654px">Enter Text Here</div>
<div id="status"></div>
<div class="a" style="left:244px;top:892px;width:1356px;height:1px;background:#d3d3d3"></div>
<div class="a" style="left:244px;top:893px;width:1356px;height:4px;background:#fcfcfc"></div>
<div class="a" style="left:0;top:897px;width:1600px;height:1px;background:#c9c9c9"></div>
<div class="a" style="left:0;top:898px;width:1600px;height:25px;background:linear-gradient(#e3e3e3,#d8d8d8)"></div>
<div class="a" style="left:1208px;top:898px;width:41px;height:25px;background:#aaaaaa"></div>
<div class="st" style="left:26.5px;top:903px;font-size:13.7px;letter-spacing:0.05px">Slide 12 of 16</div>
<div class="st" style="left:133.3px;top:903px">English (United States)</div>
<svg class="a" style="left:1030px;top:902px" width="17" height="16" viewBox="0 0 17 16">
<path d="M4.5 4.5 L8.2 0.8 L11.9 4.5 Z" fill="#444"/>
<rect x="1" y="6.2" width="14.5" height="1.3" fill="#555"/><rect x="3" y="9.2" width="12.5" height="1.3" fill="#555"/><rect x="1" y="12.2" width="14.5" height="1.3" fill="#555"/><rect x="3" y="14.6" width="4" height="1.2" fill="#555"/>
</svg>
<div class="st" style="left:1050.5px;top:903px">Notes</div>
<svg class="a" style="left:1109px;top:903px" width="17" height="15" viewBox="0 0 17 15">
<path d="M1 1 H15.5 V10.5 H6.5 L4 14 V10.5 H1 Z" fill="#4a4a4a"/>
</svg>
<div class="st" style="left:1129.3px;top:903px">Comments</div>
<svg class="a" style="left:1219px;top:902px" width="19" height="17" viewBox="0 0 19 17">
<rect x="1.5" y="1" width="15.5" height="14.5" rx="1" fill="#fff"/>
<rect x="4" y="3.2" width="10.5" height="6.5" fill="none" stroke="#9a9a9a" stroke-width="1.1"/>
<rect x="4" y="12" width="10.5" height="1.3" fill="#9a9a9a"/>
</svg>
<svg class="a" style="left:1259px;top:903px" width="19" height="15" viewBox="0 0 19 15">
<rect x="1" y="1.5" width="6.5" height="4.5" rx="1" fill="#4e4e4e"/><rect x="10.5" y="1.5" width="6.5" height="4.5" rx="1" fill="#4e4e4e"/>
<rect x="1" y="8.5" width="6.5" height="4.5" rx="1" fill="#4e4e4e"/><rect x="10.5" y="8.5" width="6.5" height="4.5" rx="1" fill="#4e4e4e"/>
</svg>
<svg class="a" style="left:1299px;top:903px" width="19" height="16" viewBox="0 0 19 16">
<rect x="1.5" y="1" width="15.5" height="1.5" fill="#555"/>
<rect x="2.5" y="2.5" width="13.5" height="8.5" fill="none" stroke="#555" stroke-width="1.2"/>
<rect x="5.5" y="5" width="7.5" height="1.1" fill="#777"/>
<rect x="8.7" y="11" width="1.2" height="3.5" fill="#555"/><rect x="6" y="14" width="6.5" height="1.2" fill="#555"/>
</svg>
<div class="a" style="left:1336.5px;top:909.8px;width:9px;height:2px;background:#4a4a4a"></div>
<div class="a" style="left:1354.5px;top:908.8px;width:109px;height:4px;border-radius:2px;background:#9b9b9b"></div>
<div class="a" style="left:1404.5px;top:903.5px;width:14px;height:14px;border-radius:50%;background:#fff;box-shadow:0 0.5px 1.5px rgba(0,0,0,0.45)"></div>
<div class="a" style="left:1472px;top:909.6px;width:9px;height:2.2px;background:#4a4a4a"></div>
<div class="a" style="left:1475.4px;top:906.2px;width:2.2px;height:9px;background:#4a4a4a"></div>
<div class="st" style="left:1500.5px;top:903px;font-size:13.2px">115%</div>
<svg class="a" style="left:1553px;top:902px" width="17" height="17" viewBox="0 0 17 17">
<rect x="1.5" y="1.5" width="14" height="14" fill="none" stroke="#4a4a4a" stroke-width="1.2"/>
<path d="M8.5 3.5 V6.5 M7.3 4.7 L8.5 3.5 L9.7 4.7 M8.5 13.5 V10.5 M7.3 12.3 L8.5 13.5 L9.7 12.3 M3.5 8.5 H6.5 M4.7 7.3 L3.5 8.5 L4.7 9.7 M13.5 8.5 H10.5 M12.3 7.3 L13.5 8.5 L12.3 9.7" stroke="#555" stroke-width="0.8" fill="none"/>
</svg>

</body></html>
